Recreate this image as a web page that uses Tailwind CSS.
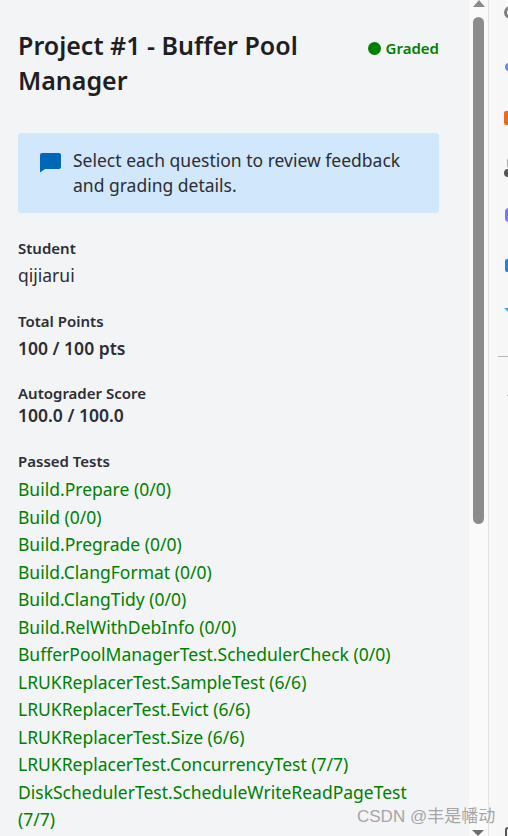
<!DOCTYPE html>
<html lang="en">
<head>
    <meta charset="UTF-8">
    <meta name="viewport" content="width=device-width, initial-scale=1.0">
    <title>Project #1 - Buffer Pool Manager</title>
    <script src="https://cdn.jsdelivr.net/npm/@tailwindcss/browser@4"></script>
</head>
<body class="bg-[#f2f4f6] overflow-hidden">
    <div class="relative flex h-[836px] w-[508px] overflow-hidden font-['Noto_Sans',sans-serif]">
        <!-- Submission panel -->
        <main class="w-[469px] shrink-0 bg-[#f2f4f6] pl-[18px] pr-[30px] pt-[28px] text-[#2d2d33]">
            <div class="flex items-start justify-between">
                <h1 class="w-[330px] text-[25px] leading-[35px] font-semibold text-[#1e1e24]">Project #1 - Buffer Pool Manager</h1>
                <div class="mt-[10px] flex items-center gap-[5px] text-[15px] leading-[20px] font-semibold text-[#008000]">
                    <span class="h-[13px] w-[13px] rounded-full bg-[#008000]"></span>
                    <span>Graded</span>
                </div>
            </div>

            <div class="mt-[35px] flex h-[80px] gap-[12px] rounded-[3px] bg-[#d1e7fb] pl-[22px] pr-[16px] pt-[15px] text-[17.500px] leading-[25px]">
                <svg class="mt-[5px] h-[20px] w-[21px] shrink-0" viewBox="0 0 21 20"><path fill="#0067b8" d="M2 0h17a2 2 0 0 1 2 2v12a2 2 0 0 1-2 2H5l-5 3.500V2a2 2 0 0 1 2-2z"/></svg>
                <p>Select each question to review feedback and grading details.</p>
            </div>

            <section class="mt-[25px]">
                <h2 class="text-[15px] leading-[20px] font-semibold">Student</h2>
                <p class="mt-[5px] text-[17.500px] leading-[24px]">qijiarui</p>
            </section>

            <section class="mt-[24px]">
                <h2 class="text-[15px] leading-[20px] font-semibold">Total Points</h2>
                <p class="mt-[5px] text-[17.500px] leading-[24px] font-semibold">100 / 100 pts</p>
            </section>

            <section class="mt-[23px]">
                <h2 class="text-[15px] leading-[20px] font-semibold">Autograder Score</h2>
                <p class="text-[17.500px] leading-[24px] font-semibold">100.0 / 100.0</p>
            </section>

            <section class="mt-[24px]">
                <h2 class="text-[15px] leading-[20px] font-semibold">Passed Tests</h2>
                <ul class="mt-[5px] text-[17.500px] leading-[27.500px] text-[#008000]">
                    <li>Build.Prepare (0/0)</li>
                    <li>Build (0/0)</li>
                    <li>Build.Pregrade (0/0)</li>
                    <li>Build.ClangFormat (0/0)</li>
                    <li>Build.ClangTidy (0/0)</li>
                    <li>Build.RelWithDebInfo (0/0)</li>
                    <li>BufferPoolManagerTest.SchedulerCheck (0/0)</li>
                    <li>LRUKReplacerTest.SampleTest (6/6)</li>
                    <li>LRUKReplacerTest.Evict (6/6)</li>
                    <li>LRUKReplacerTest.Size (6/6)</li>
                    <li>LRUKReplacerTest.ConcurrencyTest (7/7)</li>
                    <li>DiskSchedulerTest.ScheduleWriteReadPageTest (7/7)</li>
                </ul>
            </section>
        </main>

        <!-- Scrollbar -->
        <div class="relative w-[19px] shrink-0 bg-[#fafafa]">
            <div class="mx-auto h-0 w-0 border-x-[6px] border-b-[7px] border-x-transparent border-b-[#8a8a8a]"></div>
            <div class="mx-auto mt-[10px] h-[507px] w-[11px] rounded-[6px] bg-[#8c8c8c]"></div>
            <div class="absolute bottom-0 left-[3px] h-0 w-0 border-x-[6px] border-t-[6px] border-x-transparent border-t-[#6e6e6e]"></div>
        </div>

        <!-- Browser side bar, only the left edge of its icons shows -->
        <aside class="relative grow overflow-hidden border-l border-[#e3e3e3] bg-[#f7f7f7]">
            <div class="ml-[15px] flex flex-col items-start">
                <span class="mt-[6px] h-[13px] w-[13px] rounded-full border-[3px] border-[#7d7d7d]"></span>
                <span class="ml-[1px] mt-[44px] h-[8px] w-[8px] rounded-full bg-[#5b8ff9]"></span>
                <span class="mt-[40px] h-[14px] w-[13px] rounded-[2px] bg-[#ea6a1e]"></span>
                <span class="ml-[3px] mt-[33px] h-[10px] w-[6px] rounded-l-[3px] bg-[#a8a8a8]"></span>
                <span class="mt-[1px] h-[8px] w-[13px] rounded-l-[4px] bg-[#555555]"></span>
                <span class="ml-[1px] mt-[31px] h-[14px] w-[13px] rounded-l-[4px] bg-[#6f7df0]"></span>
                <span class="ml-[1px] mt-[37px] h-[13px] w-[13px] rounded-l-[2px] bg-[#1a84e8]"></span>
                <span class="mt-[36px] h-0 w-0 border-x-[6px] border-t-[6px] border-x-transparent border-t-[#3fa9f5]"></span>
            </div>
            <div class="ml-[9px] mt-[42px] h-px bg-[#b5b5b5]"></div>
            <div class="ml-[18px] mt-[38px] h-px bg-[#9a9a9a]"></div>
            <span class="absolute bottom-0 left-[16px] h-[9px] w-[8px] rounded-t-[3px] border-2 border-b-0 border-[#555555]"></span>
        </aside>

        <span class="absolute left-[357px] top-[805px] text-[17px] leading-[24px] text-[#9a9a9a]/90 font-['Liberation_Sans','Noto_Sans_CJK_SC',sans-serif]">CSDN @丰是幡动</span>
    </div>
</body>
</html>
